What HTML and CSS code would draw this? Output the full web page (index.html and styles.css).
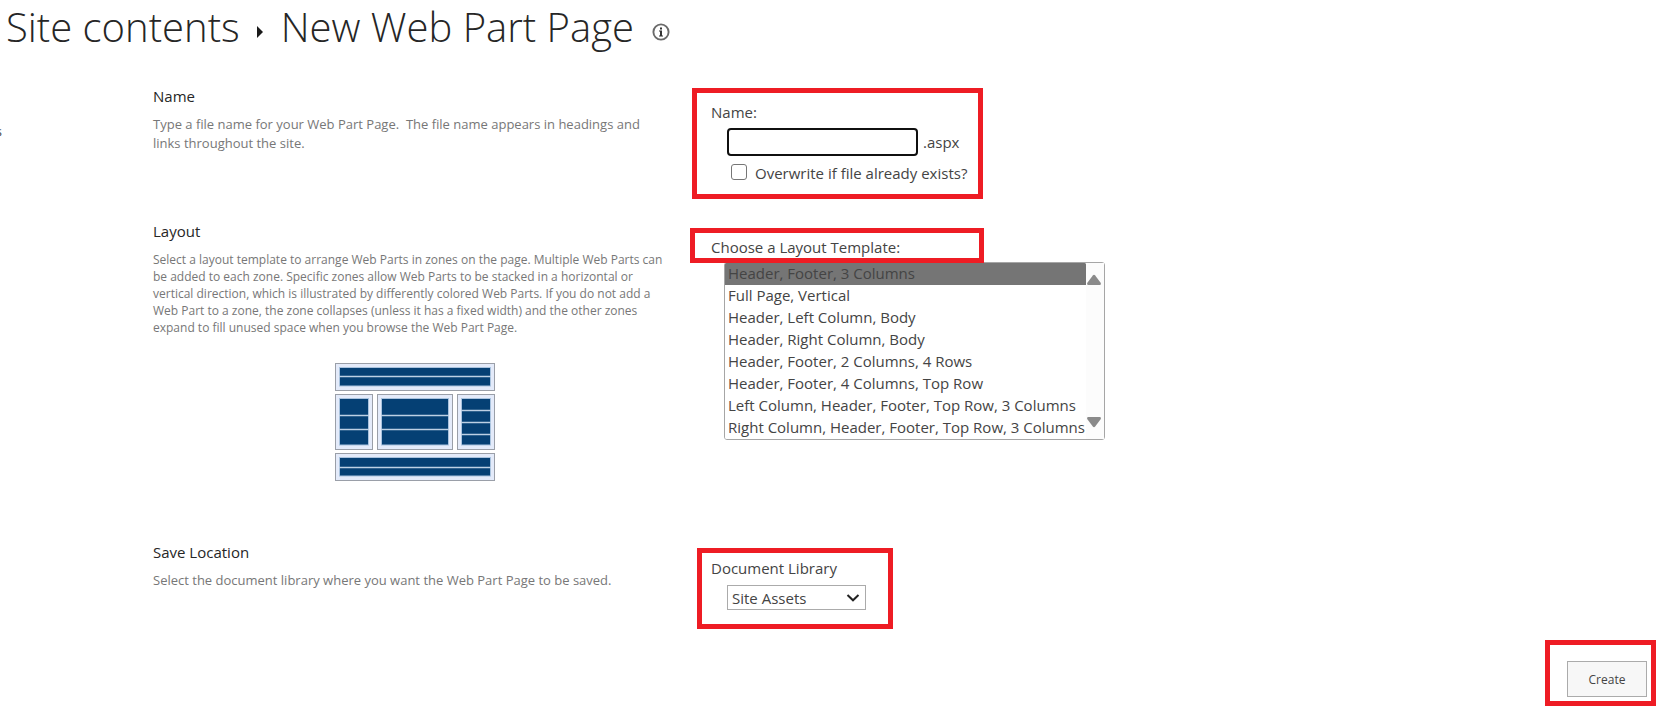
FILE: index.html
```html
<!DOCTYPE html>
<html lang="en">
<head>
<meta charset="utf-8">
<title>New Web Part Page</title>
<link rel="stylesheet" href="styles.css">
</head>
<body>
<header class="page-header">
  <h1 class="title">
    <span>Site contents</span>
    <svg class="crumb-arrow" width="7" height="12" viewBox="0 0 7 12" aria-hidden="true"><path d="M0 0L6 6L0 12Z" fill="#1a1a1a"/></svg>
    <span>New Web Part Page</span>
    <svg class="info" width="18" height="18" viewBox="0 0 18 18" aria-hidden="true">
      <circle cx="9" cy="9" r="7.6" fill="none" stroke="#6a6a6a" stroke-width="1.9"/>
      <path d="M8 4.500h2v2H8zM7 7.500h3v5h1v1H7v-1h1v-4H7z" fill="#333"/>
    </svg>
  </h1>
</header>
<div class="body">
  <nav class="side-nav"><span>Site Contents</span></nav>
  <form class="form">
    <section class="row">
      <div class="about">
        <h2>Name</h2>
        <p>Type a file name for your Web Part Page.&nbsp; The file name appears in headings and links throughout the site.</p>
      </div>
      <div class="controls">
        <div class="mark mark-name">
          <label for="file">Name:</label>
          <div class="file-line"><input class="file" id="file" type="text"><span>.aspx</span></div>
          <label class="overwrite"><input type="checkbox"><span>Overwrite if file already exists?</span></label>
        </div>
      </div>
    </section>
    <section class="row row-layout">
      <div class="about">
        <h2>Layout</h2>
        <p class="small">Select a layout template to arrange Web Parts in zones on the page. Multiple Web Parts can be added to each zone. Specific zones allow Web Parts to be stacked in a horizontal or vertical direction, which is illustrated by differently colored Web Parts. If you do not add a Web Part to a zone, the zone collapses (unless it has a fixed width) and the other zones expand to fill unused space when you browse the Web Part Page.</p>
        <svg class="preview" width="160" height="118" viewBox="0 0 160 118" role="img" aria-label="Header, Footer, 3 Columns">
          <g fill="#e4ebfa" stroke="#9a9fa8">
            <rect x=".5" y=".5" width="159" height="27"/>
            <rect x=".5" y="31.500" width="37" height="55"/>
            <rect x="42.500" y="31.500" width="75" height="55"/>
            <rect x="122.500" y="31.500" width="37" height="55"/>
            <rect x=".5" y="90.500" width="159" height="27"/>
          </g>
          <g fill="#054074" stroke="#a9c3de">
            <rect x="4.500" y="4.500" width="151" height="18.500"/>
            <rect x="4.500" y="35.500" width="29" height="46.500"/>
            <rect x="46.500" y="35.500" width="67" height="46.500"/>
            <rect x="126.500" y="35.500" width="29" height="46.500"/>
            <rect x="4.500" y="94.500" width="151" height="18.500"/>
          </g>
          <path d="M4 13.500H156M4 104.500H156M4 52.500H34M4 66.500H34M46 52.500H114M46 66.500H114M126 47.500H156M126 59.500H156M126 71.500H156" stroke="#bdd0e4" stroke-width="1.300"/>
        </svg>
      </div>
      <div class="controls">
        <div class="mark mark-template"><label for="template">Choose a Layout Template:</label></div>
        <div class="list">
          <select class="template" id="template" size="8">
            <option selected>Header, Footer, 3 Columns</option>
            <option>Full Page, Vertical</option>
            <option>Header, Left Column, Body</option>
            <option>Header, Right Column, Body</option>
            <option>Header, Footer, 2 Columns, 4 Rows</option>
            <option>Header, Footer, 4 Columns, Top Row</option>
            <option>Left Column, Header, Footer, Top Row, 3 Columns</option>
            <option>Right Column, Header, Footer, Top Row, 3 Columns</option>
          </select>
          <div class="track" aria-hidden="true">
            <svg width="16" height="12" viewBox="0 0 16 12"><path d="M6.800 1.500Q8 .2 9.200 1.500L14.800 9Q15.500 11 13.700 11H2.300Q.5 11 1.200 9Z" fill="#8a8a8a"/></svg>
            <svg width="16" height="12" viewBox="0 0 16 12"><path d="M6.800 10.500Q8 11.800 9.200 10.500L14.800 3Q15.500 1 13.700 1H2.300Q.5 1 1.200 3Z" fill="#8a8a8a"/></svg>
          </div>
        </div>
      </div>
    </section>
    <section class="row row-save">
      <div class="about">
        <h2>Save Location</h2>
        <p>Select the document library where you want the Web Part Page to be saved.</p>
      </div>
      <div class="controls">
        <div class="mark mark-library">
          <label for="library">Document Library</label>
          <div class="picker">
            <select class="library" id="library"><option>Site Assets</option></select>
            <svg class="chevron" width="14" height="8" viewBox="0 0 14 8" aria-hidden="true"><path d="M1.500 1L7 6.300L12.500 1" fill="none" stroke="#222" stroke-width="2"/></svg>
          </div>
        </div>
      </div>
    </section>
    <div class="actions">
      <div class="mark mark-create"><button class="create" type="button">Create</button></div>
    </div>
  </form>
</div>
</body>
</html>
```
FILE: styles.css
```css
* { box-sizing: border-box; }
body {
  margin: 0;
  background: #fff;
  color: #444;
  font: 15px/20px "Open Sans", "Noto Sans", sans-serif;
}
h1, h2, p { margin: 0; font-weight: 400; }
input, select, button { font: inherit; color: inherit; margin: 0; }
label { display: block; }

.page-header { padding: 0 6px 2px; }
.title {
  display: flex;
  align-items: center;
  color: #262626;
  font-size: 40px;
  font-weight: 300;
  line-height: 54px;
  white-space: nowrap;
}
.crumb-arrow { margin: 10px 17px 0; }
.info { margin: 10px 0 0 18px; }

.body { display: flex; padding-top: 30px; }
.side-nav {
  display: flex;
  justify-content: flex-end;
  flex: none;
  width: 2px;
  height: 60px;
  padding-top: 35px;
  overflow: hidden;
  font-size: 13px;
  white-space: nowrap;
}
.form { flex: 1; padding-left: 151px; }

.row { display: grid; grid-template-columns: 537px 1fr; }
.row-layout { margin-top: 22px; }
.row-save { margin-top: 61px; }
.about h2 { color: #262626; font-size: 15px; line-height: 20px; }
.about p {
  max-width: 510px;
  margin-top: 9px;
  color: #777;
  font-size: 13px;
  line-height: 19px;
}
.about .small {
  max-width: 520px;
  margin-top: 10px;
  font-size: 12px;
  line-height: 17px;
}
.preview { display: block; margin: 27px 0 0 182px; }

.mark { border: 5px solid #ee1c24; }
.mark-name { width: 291px; margin: 2px 0 0 2px; padding: 9px 14px 11px; }
.file-line { display: flex; align-items: center; gap: 5px; margin: 6px 0 7px 16px; }
.file {
  width: 191px;
  height: 28px;
  padding: 2px 5px;
  border: 2px solid #101010;
  border-radius: 4px;
}
.overwrite { display: flex; gap: 8px; margin-left: 20px; white-space: nowrap; }
.overwrite input {
  flex: none;
  appearance: none;
  width: 16px;
  height: 16px;
  margin-top: 1px;
  border: 1px solid #767676;
  border-radius: 3px;
}

.mark-template {
  position: relative;
  z-index: 1;
  width: 294px;
  margin-top: 7px;
  padding: 4px 16px 1px;
}
.list {
  display: flex;
  width: 381px;
  margin: -1px 0 0 34px;
  border: 1px solid #a6a6a6;
  border-radius: 3px;
}
.template {
  flex: 1;
  min-width: 0;
  height: 176px;
  padding: 0;
  border: 0;
  outline: 0;
  overflow: hidden;
  background: #fff;
}
.template option { height: 22px; min-height: 22px; padding: 0 0 0 3px; line-height: 22px; }
.template option:checked { background: #757575 linear-gradient(#757575, #757575); color: #444; }
.track {
  display: flex;
  flex-direction: column;
  align-items: flex-start;
  justify-content: space-between;
  width: 18px;
  padding: 11px 0;
  background: #fcfcfc;
}

.mark-library { width: 196px; margin: 6px 0 0 7px; padding: 5px 9px 14px; }
.picker { position: relative; width: 139px; margin: 7px 0 0 16px; }
.library {
  display: block;
  appearance: none;
  width: 100%;
  height: 25px;
  padding: 0 4px;
  border: 1px solid #ababab;
  border-radius: 0;
  background: #fff;
}
.chevron { position: absolute; top: 9px; right: 6px; pointer-events: none; }

.actions { display: flex; justify-content: flex-end; margin-top: 11px; }
.mark-create { padding: 16px 4px 4px 17px; }
.create {
  display: block;
  width: 80px;
  height: 36px;
  padding: 2px 0 0;
  border: 1px solid #ababab;
  background: #f7f7f7;
  font-size: 12px;
}
```
